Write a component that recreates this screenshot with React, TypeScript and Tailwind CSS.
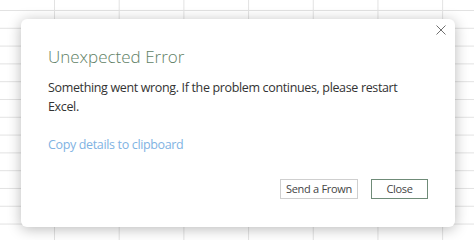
export default function App() {
  return (
    <div
      className="w-[474px] h-[240px] overflow-hidden bg-white pt-[19px] pl-[21px] bg-[linear-gradient(to_right,#e2e2e2_1px,transparent_1px),linear-gradient(to_bottom,#e2e2e2_1px,transparent_1px)] bg-[size:64.7px_17.8px] bg-[position:54px_10px]"
      style={{ fontFamily: '"Open Sans", "Noto Sans", sans-serif' }}
    >
      <div className="relative w-[434px] h-[208px] rounded-[6px] bg-white shadow-[0_2px_14px_rgba(0,0,0,0.28)] flex flex-col px-[27px]">
        <button className="absolute top-[6px] right-[9px] w-[10px] h-[10px] text-[#707070]">
          <svg viewBox="0 0 10 10" width="10" height="10" fill="none" stroke="currentColor" strokeWidth="1">
            <path d="M0.5 0.5 L9.5 9.5 M9.5 0.5 L0.5 9.5" />
          </svg>
        </button>
        <div className="pt-[26px] text-[17px] leading-[23px] font-light text-[#5f7f66]">Unexpected Error</div>
        <div className="mt-[10px] max-w-[360px] text-[12.5px] leading-[19.3px] tracking-[-0.35px] text-[#333333]">
          Something went wrong. If the problem continues, please restart Excel.
        </div>
        <div className="mt-[18px] text-[12.5px] leading-[19.3px] tracking-[-0.35px] text-[#7fb3e3]">Copy details to clipboard</div>
        <div className="mt-[25px] flex justify-end gap-[13px]">
          <button className="w-[78px] h-[20px] border border-[#cfcfcf] text-[11px] leading-[18px] tracking-[-0.3px] text-[#444444]">
            Send a Frown
          </button>
          <button className="w-[57px] h-[20px] border border-[#6f8b78] text-[11px] leading-[18px] tracking-[-0.3px] text-[#444444]">
            Close
          </button>
        </div>
      </div>
    </div>
  );
}
